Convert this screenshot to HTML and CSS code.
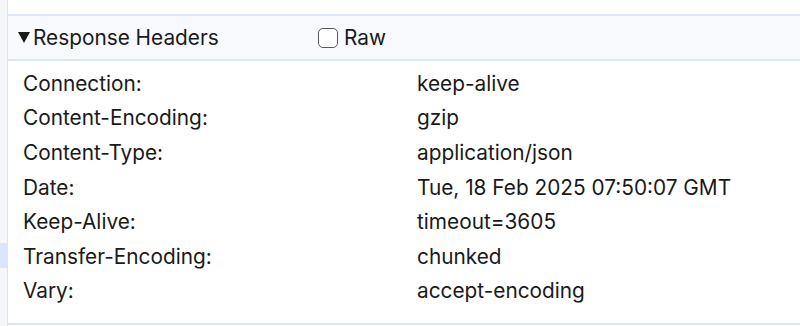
FILE: index.html
```html
<!DOCTYPE html>
<html>
<head>
<meta charset="utf-8">
<link rel="stylesheet" href="styles.css">
</head>
<body>
<div class="page">
  <div class="side">
    <div class="side-hl"></div>
  </div>
  <div class="main">
    <div class="top"></div>
    <div class="section">
      <div class="head">
        <div class="toggle"><span class="tri"></span><span class="title">Response Headers</span></div>
        <label class="raw"><span class="box"></span><span>Raw</span></label>
      </div>
      <div class="rows">
        <div class="row"><div class="k">Connection:</div><div class="v">keep-alive</div></div>
        <div class="row"><div class="k">Content-Encoding:</div><div class="v">gzip</div></div>
        <div class="row"><div class="k">Content-Type:</div><div class="v">application/json</div></div>
        <div class="row"><div class="k">Date:</div><div class="v">Tue, 18 Feb 2025 07:50:07 GMT</div></div>
        <div class="row"><div class="k">Keep-Alive:</div><div class="v">timeout=3605</div></div>
        <div class="row"><div class="k">Transfer-Encoding:</div><div class="v">chunked</div></div>
        <div class="row"><div class="k">Vary:</div><div class="v">accept-encoding</div></div>
      </div>
    </div>
  </div>
</div>
</body>
</html>
```
FILE: styles.css
```css
html, body { margin: 0; padding: 0; background: #fff; }
body { font-family: Inter, "Liberation Sans", sans-serif; color: #1a1a1a; font-size: 20.8px; }
.page { display: flex; width: 800px; height: 326px; overflow: hidden; }
.side { width: 7px; background: #f5f7fb; border-right: 1px solid #dce5f6; padding-top: 243px; box-sizing: content-box; }
.side-hl { height: 25px; background: #dce6fb; }
.main { flex: 1; display: flex; flex-direction: column; }
.top { height: 14px; flex: none; }
.section { border-top: 2px solid #dde6f7; border-bottom: 2px solid #dde6f7; height: 311px; flex: none; box-sizing: border-box; }
.head { height: 45px; background: #f7f9fd; border-bottom: 2px solid #dde6f7; display: flex; align-items: center; box-sizing: border-box; }
.toggle { display: flex; align-items: center; width: 300px; padding-left: 10px; }
.tri { width: 0; height: 0; border-left: 6.5px solid transparent; border-right: 6.5px solid transparent; border-top: 11px solid #1a1a1a; margin-right: 3px; }
.raw { display: flex; align-items: center; gap: 6px; }
.box { flex: none; width: 18px; height: 18px; border: 1.5px solid #5a5a5a; border-radius: 5px; background: #fff; }
.rows { padding: 5px 0 0 15px; }
.row { display: flex; height: 34.6px; align-items: center; }
.k { width: 394px; }
```
